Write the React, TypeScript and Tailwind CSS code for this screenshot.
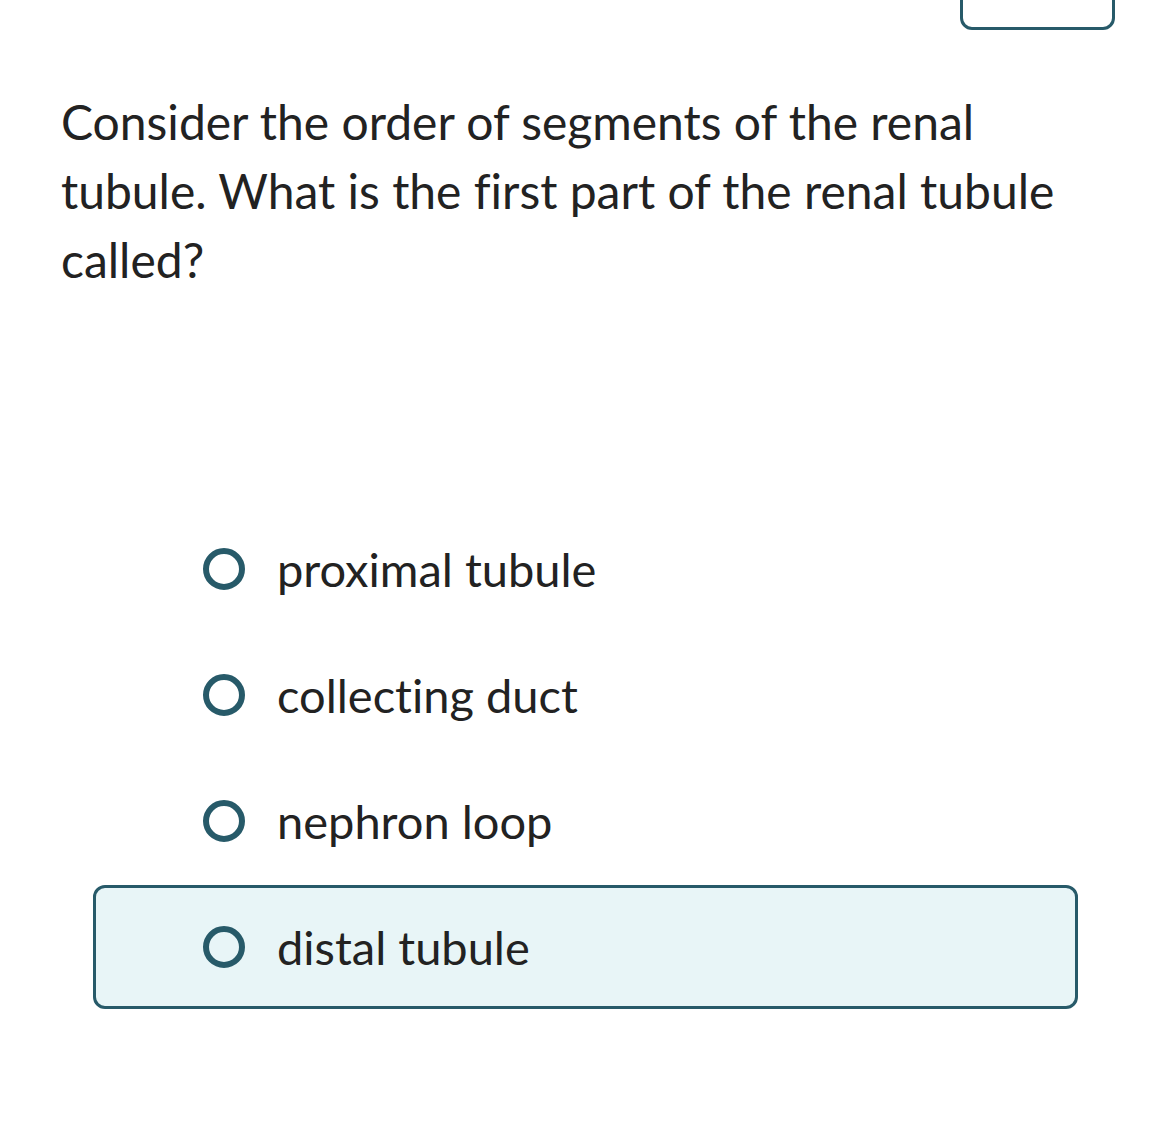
import React from "react";

const OPTIONS = ["proximal tubule", "collecting duct", "nephron loop", "distal tubule"];

export default function App() {
  const selected = 3;
  return (
    <div className="w-[1170px] h-[1140px] bg-white overflow-hidden text-[#222222] [font-variant-ligatures:none]" style={{ fontFamily: "Lato, 'Open Sans', sans-serif" }}>
      {/* top button, cut off by the viewport */}
      <div className="flex justify-end pr-[55px]">
        <div className="w-[155px] h-[50px] -mt-[20px] border-[3px] border-[#275a69] rounded-[12px]" />
      </div>

      <p className="mt-[57px] pl-[61px] pr-[100px] text-[48px] leading-[69px]">
        Consider the order of segments of the renal tubule. What is the first part of the renal tubule called?
      </p>

      <div className="mt-[213px] pl-[93px] pr-[92px] flex flex-col gap-[2px]">
        {OPTIONS.map((opt, i) => (
          <div
            key={opt}
            className={
              "h-[124px] flex items-center pl-[107px] rounded-[12px] border-[3px] " +
              (i === selected ? "bg-[#e8f5f7] border-[#275a69]" : "border-transparent")
            }
          >
            <span className="w-[42px] h-[42px] rounded-full border-[6px] border-[#275a69] shrink-0" />
            <span className="ml-[32px] text-[47px] leading-none">{opt}</span>
          </div>
        ))}
      </div>
    </div>
  );
}
